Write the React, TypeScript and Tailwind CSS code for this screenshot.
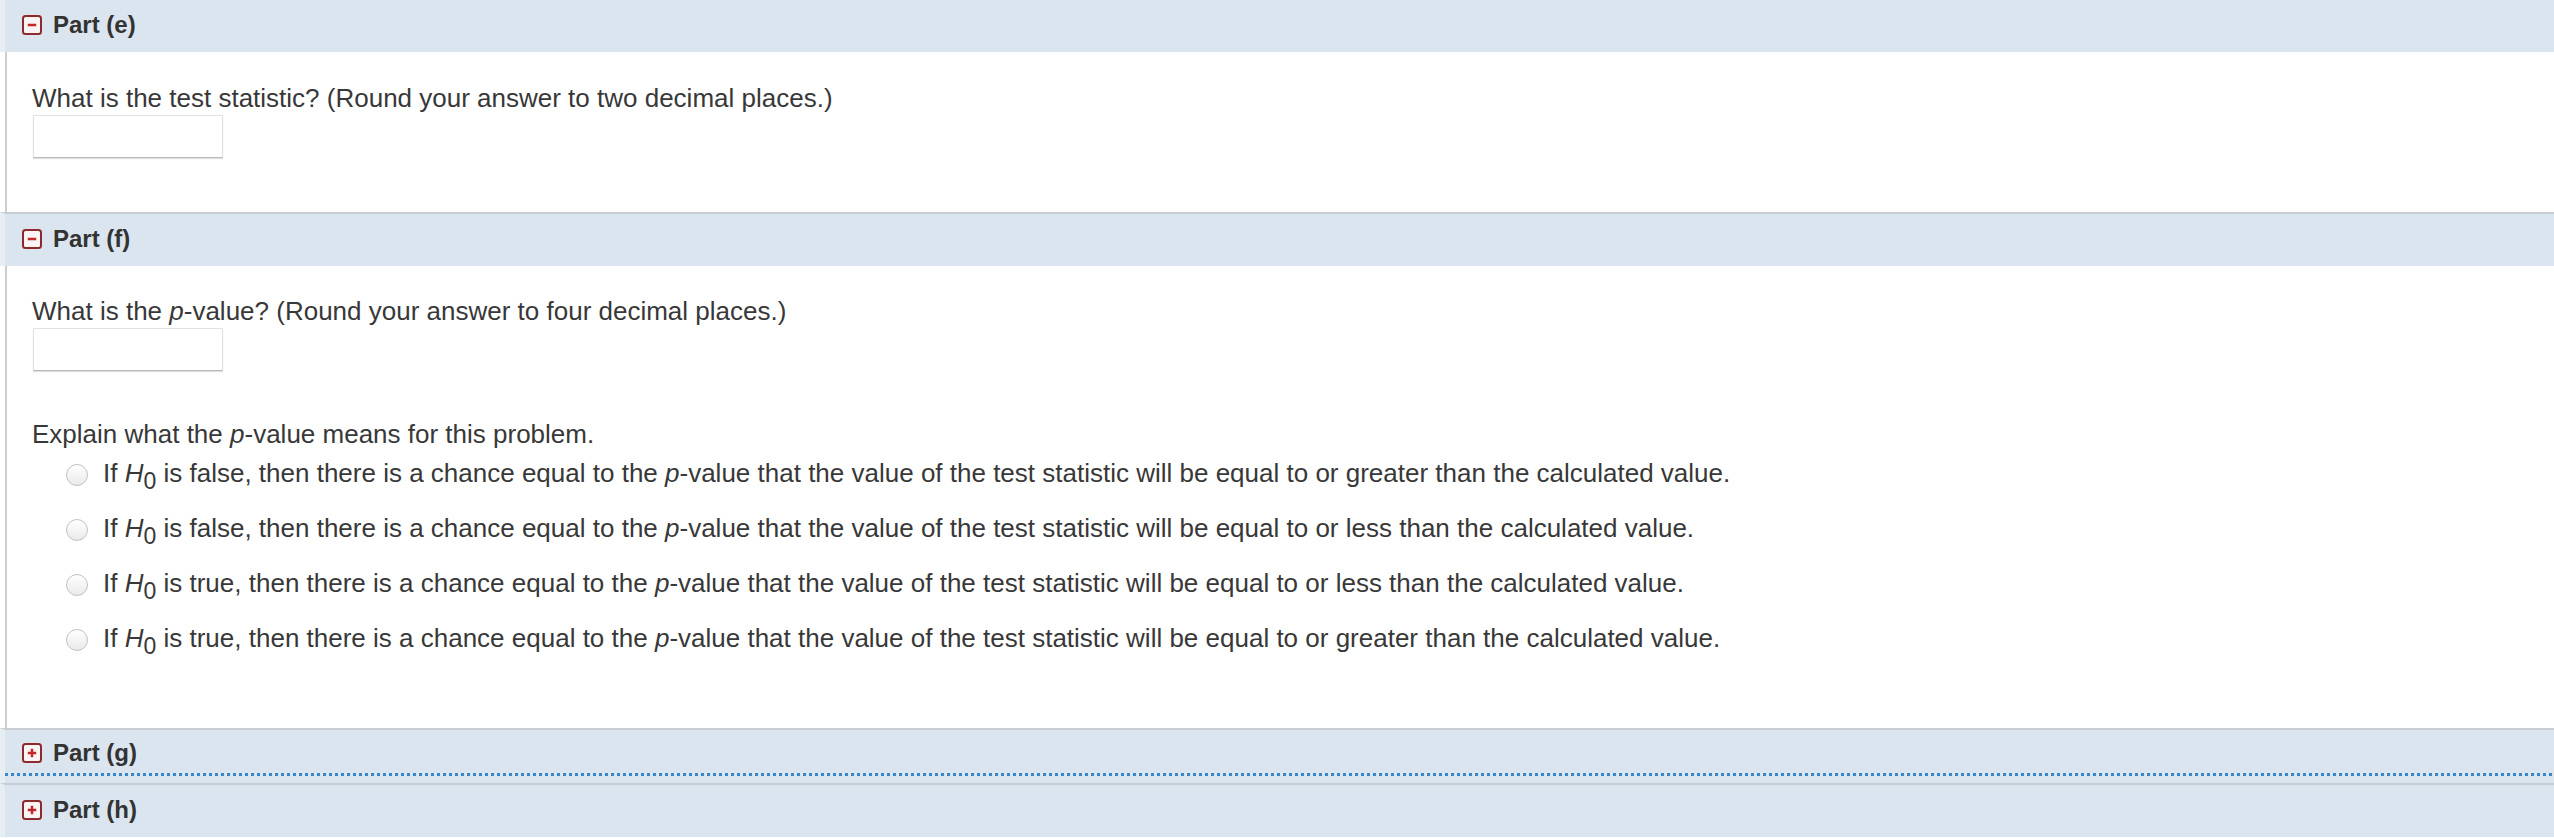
import type { ReactNode } from 'react';

type ToggleIconProps = { open: boolean };

const ToggleIcon = ({ open }: ToggleIconProps) => (
  <svg width="20" height="20" viewBox="0 0 20 20" className="shrink-0">
    <rect x="1" y="1" width="18" height="18" rx="2.5" fill="#fbf4f4" stroke="#8c2a2c" strokeWidth="2" />
    <rect x="5.75" y="8.75" width="8.5" height="2.5" fill="#c4262b" />
    {!open && <rect x="8.75" y="5.75" width="2.5" height="8.5" fill="#c4262b" />}
  </svg>
);

type PartHeaderProps = {
  label: string;
  open: boolean;
  divider?: boolean;
  focused?: boolean;
};

const PartHeader = ({ label, open, divider = true, focused = false }: PartHeaderProps) => {
  const title = (
    <div className="flex items-center gap-[11px] pl-[17px]">
      <ToggleIcon open={open} />
      <span className="text-[24px] leading-[28px] font-bold text-[#333]">Part ({label})</span>
    </div>
  );

  if (focused) {
    return (
      <div
        className={`bg-[#dbe5ef] border-l-[5px] border-l-[#e6edf3] ${divider ? 'border-t-2 border-t-[#c7cdd3]' : ''}`}
      >
        <div className="h-[43px] flex items-center pt-[2px]">{title}</div>
        <div className="h-[3px] bg-[repeating-linear-gradient(90deg,#3a87cc_0_3px,transparent_3px_6px)]" />
        <div className="h-[7px]" />
      </div>
    );
  }

  return (
    <div
      className={`bg-[#dbe5ef] border-l-[5px] border-l-[#e6edf3] flex items-center pb-[2px] ${
        divider ? 'h-[54px] border-t-2 border-t-[#c7cdd3]' : 'h-[52px]'
      }`}
    >
      {title}
    </div>
  );
};

const AnswerBox = () => (
  <div className="ml-[1px] mt-[3px] w-[190px] h-[43px] bg-white border border-[#e2e2e2] border-b-[#b9b9b9] shadow-[0_1px_1px_rgba(0,0,0,0.12)]" />
);

const P = () => <i>p</i>;

// subscript kept out of the line box so rows stay 28px tall
const H0 = () => (
  <>
    <i>H</i>
    <span className="text-[23px] leading-[0] align-[-7px]">0</span>
  </>
);

const Radio = () => (
  <span className="self-start mt-[5px] w-[22px] h-[22px] shrink-0 rounded-full border border-[#c2c2c2] bg-linear-to-b from-white to-[#eaeaea]" />
);

type Choice = { id: string; truth: 'true' | 'false'; side: 'greater' | 'less' };

const choices: Choice[] = [
  { id: 'a', truth: 'false', side: 'greater' },
  { id: 'b', truth: 'false', side: 'less' },
  { id: 'c', truth: 'true', side: 'less' },
  { id: 'd', truth: 'true', side: 'greater' },
];

const ChoiceRow = ({ choice }: { choice: Choice }) => (
  <label className="flex gap-[15px] pl-[34px]">
    <Radio />
    <span>
      If <H0 /> is {choice.truth}, then there is a chance equal to the <P />-value that the value of the test
      statistic will be equal to or {choice.side} than the calculated value.
    </span>
  </label>
);

const PartBody = ({ children, className }: { children: ReactNode; className: string }) => (
  <div className={`ml-[5px] border-l-2 border-[#cdcdcd] bg-white pl-[25px] ${className}`}>{children}</div>
);

const App = () => {
  return (
    <div className="min-h-screen bg-white font-['Liberation_Sans',Arial,Helvetica,sans-serif] text-[26px] leading-[28px] text-[#383838]">
      <PartHeader label="e" open divider={false} />
      <PartBody className="pt-[32px] pb-[54px]">
        <p>What is the test statistic? (Round your answer to two decimal places.)</p>
        <AnswerBox />
      </PartBody>

      <PartHeader label="f" open />
      <PartBody className="pt-[31px] pb-[76px]">
        <p>
          What is the <P />-value? (Round your answer to four decimal places.)
        </p>
        <AnswerBox />
        <p className="mt-[49px]">
          Explain what the <P />-value means for this problem.
        </p>
        <div className="mt-[11px] flex flex-col gap-[27px]">
          {choices.map((c) => (
            <ChoiceRow key={c.id} choice={c} />
          ))}
        </div>
      </PartBody>

      <PartHeader label="g" open={false} focused />
      <PartHeader label="h" open={false} />
    </div>
  );
};

export default App;
